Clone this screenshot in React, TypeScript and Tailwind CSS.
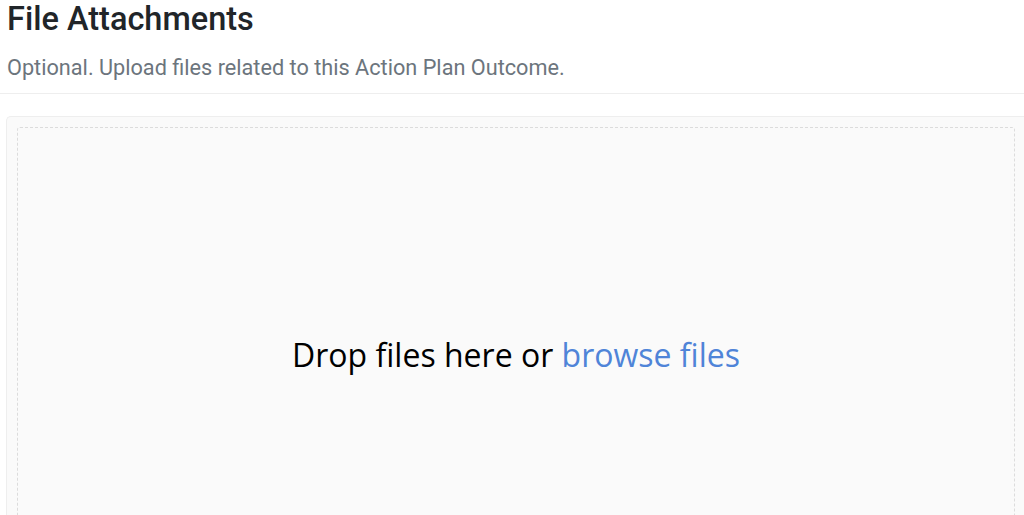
export default function App() {
    return (
        <div className="bg-white min-h-screen" style={{ fontFamily: 'Roboto, sans-serif' }}>
            <div className="px-[7px]">
                <h2 className="text-[32.5px] leading-[38px] font-medium text-[#212529]">File Attachments</h2>
                <p className="mt-[16px] text-[21.7px] leading-[28px] text-[#6c757d]">
                    Optional. Upload files related to this Action Plan Outcome.
                </p>
            </div>
            <div className="mt-[11px] border-t border-[#eeeeee]" />
            <div className="pl-[6px] pt-[22px]">
                <div className="rounded-l-[5px] border border-r-0 border-[#eeeeee] bg-[#fafafa] py-[10px] pl-[10px] pr-[9px]">
                    <div className="h-[560px] rounded-[3px] border border-dashed border-[#dcdcdc] flex items-center justify-center">
                        <div className="text-[32px] text-black -mt-[104px]" style={{ fontFamily: '"Open Sans", sans-serif' }}>
                            Drop files here or <span className="text-[#4f84d8]">browse files</span>
                        </div>
                    </div>
                </div>
            </div>
        </div>
    );
}
